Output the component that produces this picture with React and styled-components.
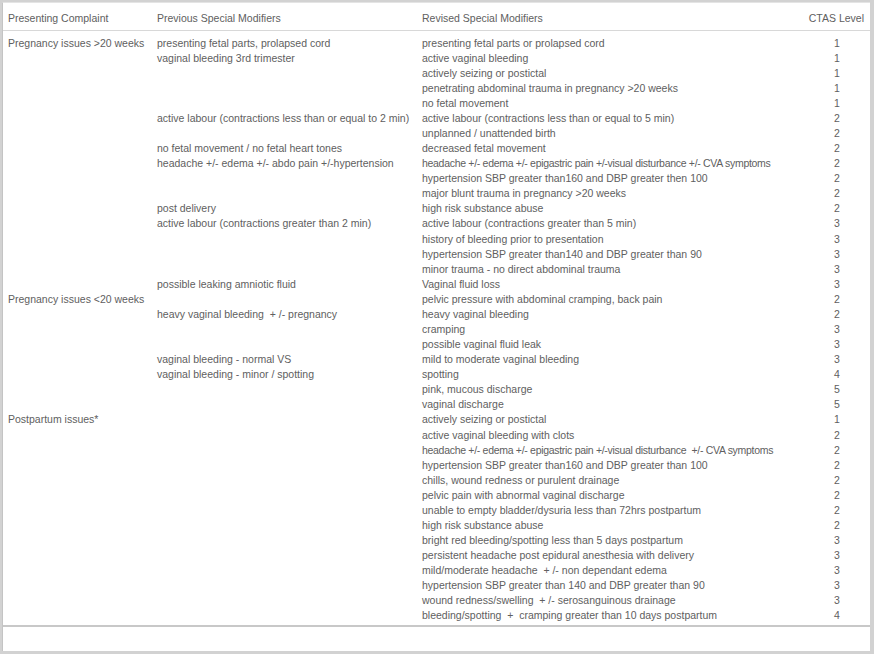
import React from 'react'
import styled, { createGlobalStyle } from 'styled-components'

const GlobalStyle = createGlobalStyle`
  html, body {
    margin: 0;
    padding: 0;
    background: #ffffff;
  }
`

// [complaint, previous modifier, revised modifier, ctas level, tight spacing]
const rows = [
  ['Pregnancy issues >20 weeks', 'presenting fetal parts, prolapsed cord', 'presenting fetal parts or prolapsed cord', 1],
  ['', 'vaginal bleeding 3rd trimester', 'active vaginal bleeding', 1],
  ['', '', 'actively seizing or postictal', 1],
  ['', '', 'penetrating abdominal trauma in pregnancy >20 weeks', 1],
  ['', '', 'no fetal movement', 1],
  ['', 'active labour (contractions less than or equal to 2 min)', 'active labour (contractions less than or equal to 5 min)', 2],
  ['', '', 'unplanned / unattended birth', 2],
  ['', 'no fetal movement / no fetal heart tones', 'decreased fetal movement', 2],
  ['', 'headache +/- edema +/- abdo pain +/-hypertension', 'headache +/- edema +/- epigastric pain +/-visual disturbance +/- CVA symptoms', 2, true],
  ['', '', 'hypertension SBP greater than160 and DBP greater then 100', 2],
  ['', '', 'major blunt trauma in pregnancy >20 weeks', 2],
  ['', 'post delivery', 'high risk substance abuse', 2],
  ['', 'active labour (contractions greater than 2 min)', 'active labour (contractions greater than 5 min)', 3],
  ['', '', 'history of bleeding prior to presentation', 3],
  ['', '', 'hypertension SBP greater than140 and DBP greater than 90', 3],
  ['', '', 'minor trauma - no direct abdominal trauma', 3],
  ['', 'possible leaking amniotic fluid', 'Vaginal fluid loss', 3],
  ['Pregnancy issues <20 weeks', '', 'pelvic pressure with abdominal cramping, back pain', 2],
  ['', 'heavy vaginal bleeding  + /- pregnancy', 'heavy vaginal bleeding', 2],
  ['', '', 'cramping', 3],
  ['', '', 'possible vaginal fluid leak', 3],
  ['', 'vaginal bleeding - normal VS', 'mild to moderate vaginal bleeding', 3],
  ['', 'vaginal bleeding - minor / spotting', 'spotting', 4],
  ['', '', 'pink, mucous discharge', 5],
  ['', '', 'vaginal discharge', 5],
  ['Postpartum issues*', '', 'actively seizing or postictal', 1],
  ['', '', 'active vaginal bleeding with clots', 2],
  ['', '', 'headache +/- edema +/- epigastric pain +/-visual disturbance  +/- CVA symptoms', 2, true],
  ['', '', 'hypertension SBP greater than160 and DBP greater than 100', 2],
  ['', '', 'chills, wound redness or purulent drainage', 2],
  ['', '', 'pelvic pain with abnormal vaginal discharge', 2],
  ['', '', 'unable to empty bladder/dysuria less than 72hrs postpartum', 2],
  ['', '', 'high risk substance abuse', 2],
  ['', '', 'bright red bleeding/spotting less than 5 days postpartum', 3],
  ['', '', 'persistent headache post epidural anesthesia with delivery', 3],
  ['', '', 'mild/moderate headache  + /- non dependant edema', 3],
  ['', '', 'hypertension SBP greater than 140 and DBP greater than 90', 3],
  ['', '', 'wound redness/swelling  + /- serosanguinous drainage', 3],
  ['', '', 'bleeding/spotting  +  cramping greater than 10 days postpartum', 4],
]

const Frame = styled.div`
  width: 874px;
  height: 654px;
  box-sizing: border-box;
  background: #d2d2d2;
  padding: 2px 4px 3px 2px;
  display: flex;
  flex-direction: column;
`

const Panel = styled.div`
  flex: 1;
  display: flex;
  flex-direction: column;
  background: #ffffff;
  border-left: 1px solid #c4c4c4;
  border-top: 1px solid #e4e4e4;
`

const Body = styled.div`
  height: 624px;
  box-sizing: border-box;
  border-bottom: 2px solid #c8c8c8;
`

const Footer = styled.div`
  flex: 1;
`

const Table = styled.table`
  width: 100%;
  border-collapse: collapse;
  border-spacing: 0;
  font-family: "Liberation Sans", Arial, sans-serif;
  font-size: 10.5px;
  color: #606060;
`

const HeadRow = styled.tr`
  height: 27px;
  border-bottom: 1px solid #d8d8d8;
`

const HeadCell = styled.th`
  font-weight: normal;
  text-align: ${p => (p.$end ? 'right' : 'left')};
  padding: 4px ${p => (p.$end ? '6px' : '0')} 0 ${p => p.$pad || 0}px;
  width: ${p => (p.$w ? `${p.$w}px` : 'auto')};
  white-space: nowrap;
`

const Row = styled.tr`
  height: 15.08px;
  &:first-child td {
    padding-top: 5px;
  }
`

const Cell = styled.td`
  padding: 0 0 0 ${p => p.$pad || 0}px;
  white-space: pre;
  text-align: ${p => (p.$center ? 'center' : 'left')};
  letter-spacing: ${p => (p.$tight ? '-0.3px' : 'normal')};
  line-height: 15.08px;
`

export default function App() {
  return (
    <>
      <GlobalStyle />
      <Frame>
        <Panel>
          <Body>
            <Table>
              <thead>
                <HeadRow>
                  <HeadCell $pad={5} $w={149}>Presenting Complaint</HeadCell>
                  <HeadCell $w={265}>Previous Special Modifiers</HeadCell>
                  <HeadCell>Revised Special Modifiers</HeadCell>
                  <HeadCell $end $w={60}>CTAS Level</HeadCell>
                </HeadRow>
              </thead>
              <tbody>
                {rows.map((r, i) => (
                  <Row key={i}>
                    <Cell $pad={5}>{r[0]}</Cell>
                    <Cell>{r[1]}</Cell>
                    <Cell $tight={r[4]}>{r[2]}</Cell>
                    <Cell $center>{r[3]}</Cell>
                  </Row>
                ))}
              </tbody>
            </Table>
          </Body>
          <Footer />
        </Panel>
      </Frame>
    </>
  )
}
